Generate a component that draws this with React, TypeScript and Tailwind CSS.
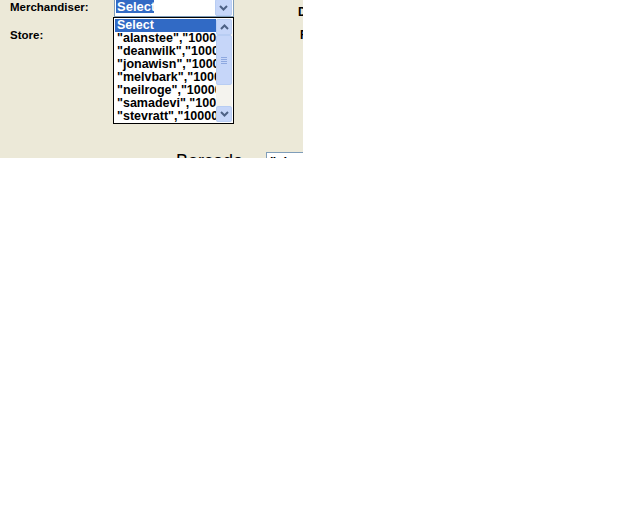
import React from "react";

const items = [
  "Select",
  '"alanstee","10000',
  '"deanwilk","1000',
  '"jonawisn","1000',
  '"melvbark","1000',
  '"neilroge","10000',
  '"samadevi","1000',
  '"stevratt","10000',
];

function Chevron({ up }: { up?: boolean }) {
  return (
    <svg width="9" height="6" viewBox="0 0 9 6" className="block">
      <path
        d={up ? "M1 5 L4.5 1.5 L8 5" : "M1 1 L4.5 4.5 L8 1"}
        fill="none"
        stroke="#4d6185"
        strokeWidth="2"
      />
    </svg>
  );
}

function ScrollBtn({ up }: { up?: boolean }) {
  return (
    <div className="w-[16px] h-[16px] shrink-0 rounded-[2px] border border-[#b8cdf3] bg-[#c6d6f9] flex items-center justify-center">
      <Chevron up={up} />
    </div>
  );
}

export default function App() {
  return (
    <div className="w-[640px] h-[512px] bg-white" style={{ fontFamily: '"Liberation Sans", Arial, sans-serif' }}>
      <div className="relative w-[303px] h-[158px] bg-[#ece9d8] overflow-hidden">
        {/* Row 1 */}
        <div className="flex items-start h-[17px] -mt-[3px]">
          <div className="w-[114px] shrink-0 pl-[10px] pt-[4px] text-[11.5px] font-bold text-black leading-[13px]">Merchandiser:</div>
          <div className="w-[120px] h-[20px] shrink-0 border border-[#7f9db9] bg-white flex items-start pl-[1px] pr-[1px] pt-[1px]">
            <div className="flex-1 h-full pt-[1px] flex items-start">
              <div className="bg-[#316ac5] text-white text-[13px] font-bold leading-[13px] h-[13px] px-[1px] w-[38px] whitespace-nowrap">Select</div>
            </div>
            <div className="w-[17px] h-[17px] rounded-[2px] border border-[#b8cdf3] bg-[#c6d6f9] flex items-center justify-center">
              <Chevron />
            </div>
          </div>
          <div className="ml-[64px] shrink-0 pt-[9px] text-[12px] font-bold leading-[13px]">D</div>
        </div>

        {/* Row 2 */}
        <div className="flex items-start mt-[15px]">
          <div className="w-[300px] shrink-0 pl-[10px] text-[11.5px] font-bold text-black leading-[13px]">Store:</div>
          <div className="shrink-0 text-[12px] font-bold leading-[13px]">F</div>
        </div>

        {/* Row 3 */}
        <div className="flex items-start mt-[109px]">
          <div className="w-[176px] shrink-0"></div>
          <div className="w-[90px] shrink-0 text-[18px] text-black leading-[20px]">Barcode</div>
          <div className="shrink-0 mt-[1px] w-[60px] h-[20px] border border-[#7f9db9] bg-white pl-[3px] text-[13px] font-bold leading-[18px]">"abc</div>
        </div>

        {/* Open dropdown list */}
        <div className="absolute left-[113px] top-[17px] w-[121px] h-[107px] border border-black bg-white flex p-[1px]">
          <div className="flex-1 flex flex-col overflow-hidden">
            {items.map((t, i) => (
              <div
                key={i}
                className={
                  "h-[13px] shrink-0 leading-[13px] text-[12.5px] font-bold whitespace-nowrap pl-[2px] " +
                  (i === 0 ? "bg-[#316ac5] text-white" : "text-black")
                }
              >
                {t}
              </div>
            ))}
          </div>
          <div className="w-[16px] flex flex-col bg-[#f4f3ee]">
            <ScrollBtn up />
            <div className="h-[50px] shrink-0 rounded-[2px] border border-[#b8cdf3] bg-[#c6d6f9] flex flex-col items-center justify-center gap-[1px]">
              <div className="w-[6px] h-[1px] bg-[#8ea8e0]" />
              <div className="w-[6px] h-[1px] bg-[#8ea8e0]" />
              <div className="w-[6px] h-[1px] bg-[#8ea8e0]" />
              <div className="w-[6px] h-[1px] bg-[#8ea8e0]" />
            </div>
            <div className="flex-1" />
            <ScrollBtn />
          </div>
        </div>
      </div>
    </div>
  );
}
